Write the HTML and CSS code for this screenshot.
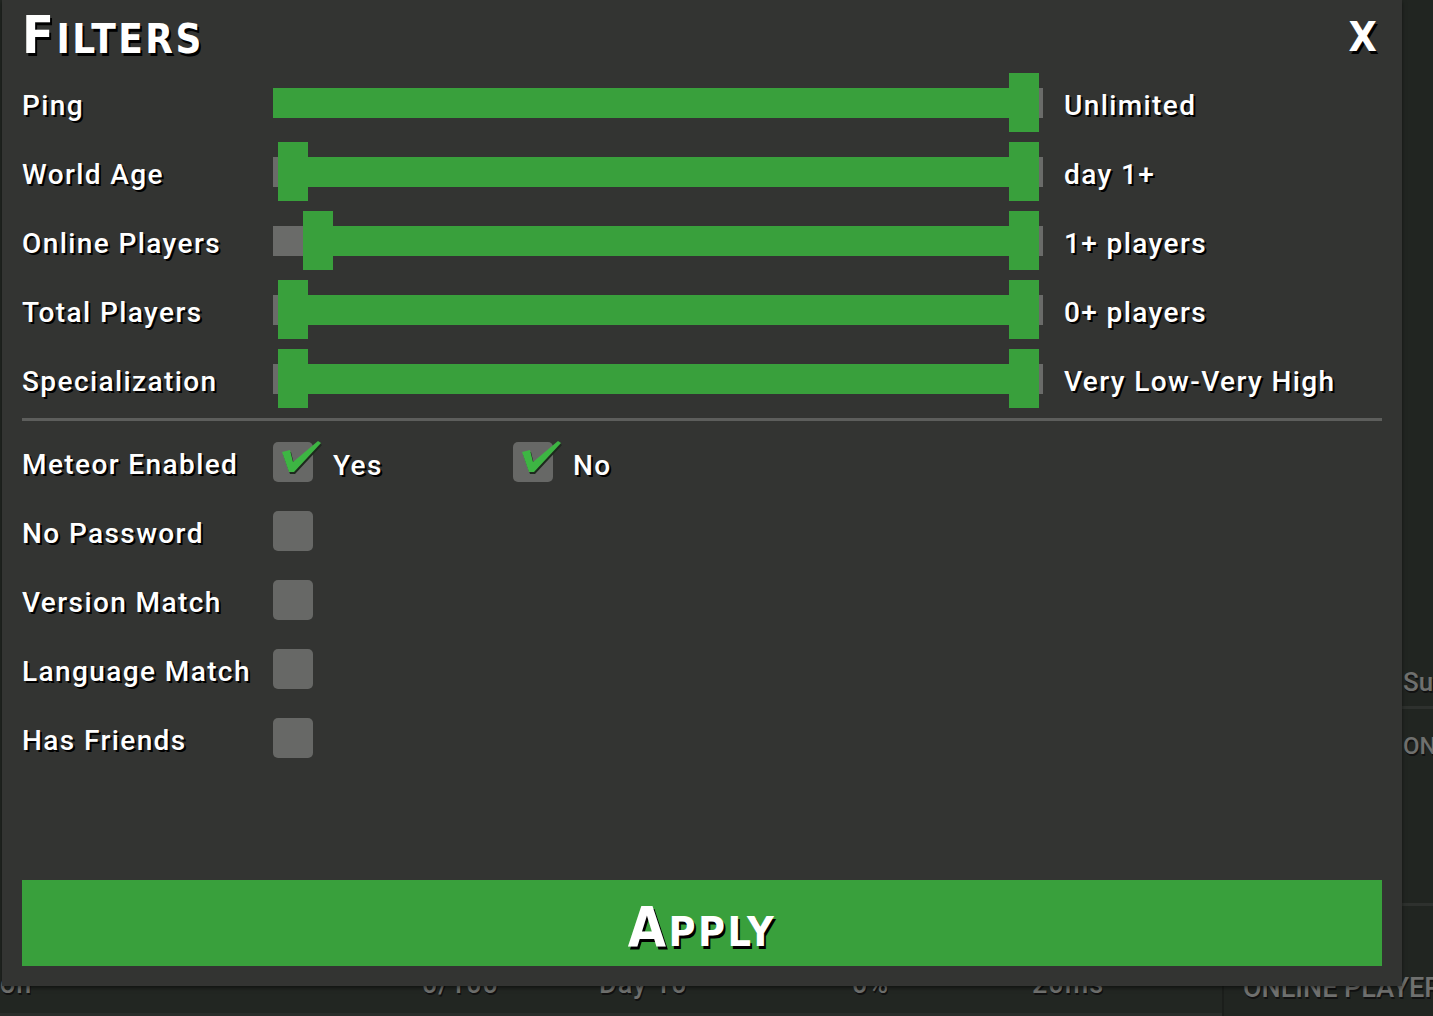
FILE: index.html
```html
<!DOCTYPE html>
<html lang="en">
<head>
<meta charset="utf-8">
<title>Filters</title>
<link rel="stylesheet" href="styles.css">
</head>
<body>
<div class="backdrop">
  <div class="bg-main">
    <div class="bg-row">
      <span class="bg-c1">ion</span>
      <span class="bg-c2">0/100</span>
      <span class="bg-c3">Day 10</span>
      <span class="bg-c4">0%</span>
      <span class="bg-c5">20ms</span>
    </div>
    <div class="bg-band"></div>
  </div>
  <div class="bg-side">
    <div class="side-su">Su</div>
    <div class="side-line"></div>
    <div class="side-on">ON</div>
    <div class="side-line second"></div>
    <div class="side-head">ONLINE PLAYER</div>
  </div>
</div>

<div class="modal">
  <div class="modal-head">
    <h1 class="title"><span class="cap">F</span><span class="sc">ilters</span></h1>
    <div class="close">X</div>
  </div>

  <div class="row">
    <div class="label">Ping</div>
    <div class="slider">
      <div class="track"></div>
      <div class="fill" style="left:0px;width:736px"></div>
      <div class="handle" style="left:736px"></div>
    </div>
    <div class="value">Unlimited</div>
  </div>
  <div class="row">
    <div class="label">World Age</div>
    <div class="slider">
      <div class="track"></div>
      <div class="fill" style="left:35px;width:701px"></div>
      <div class="handle" style="left:5px"></div>
      <div class="handle" style="left:736px"></div>
    </div>
    <div class="value">day 1+</div>
  </div>
  <div class="row">
    <div class="label">Online Players</div>
    <div class="slider">
      <div class="track"></div>
      <div class="fill" style="left:60px;width:676px"></div>
      <div class="handle" style="left:30px"></div>
      <div class="handle" style="left:736px"></div>
    </div>
    <div class="value">1+ players</div>
  </div>
  <div class="row">
    <div class="label">Total Players</div>
    <div class="slider">
      <div class="track"></div>
      <div class="fill" style="left:35px;width:701px"></div>
      <div class="handle" style="left:5px"></div>
      <div class="handle" style="left:736px"></div>
    </div>
    <div class="value">0+ players</div>
  </div>
  <div class="row">
    <div class="label">Specialization</div>
    <div class="slider">
      <div class="track"></div>
      <div class="fill" style="left:35px;width:701px"></div>
      <div class="handle" style="left:5px"></div>
      <div class="handle" style="left:736px"></div>
    </div>
    <div class="value">Very Low-Very High</div>
  </div>

  <div class="divider"></div>

  <div class="row">
    <div class="label">Meteor Enabled</div>
    <div class="options">
      <div class="option">
        <div class="box checked">
          <svg class="check" viewBox="0 0 50 45" width="50" height="45">
            <polygon class="check-shadow" points="4,24 12,22 15,34 40,13 43,15 16,44 11,44"/>
            <polygon class="check-mark" points="3,22 11,20 14,32 39,11 42,13 15,42 10,42"/>
          </svg>
        </div>
        <span class="opt-text">Yes</span>
      </div>
      <div class="option">
        <div class="box checked">
          <svg class="check" viewBox="0 0 50 45" width="50" height="45">
            <polygon class="check-shadow" points="4,24 12,22 15,34 40,13 43,15 16,44 11,44"/>
            <polygon class="check-mark" points="3,22 11,20 14,32 39,11 42,13 15,42 10,42"/>
          </svg>
        </div>
        <span class="opt-text">No</span>
      </div>
    </div>
  </div>
  <div class="row">
    <div class="label">No Password</div>
    <div class="options"><div class="option"><div class="box"></div></div></div>
  </div>
  <div class="row">
    <div class="label">Version Match</div>
    <div class="options"><div class="option"><div class="box"></div></div></div>
  </div>
  <div class="row">
    <div class="label">Language Match</div>
    <div class="options"><div class="option"><div class="box"></div></div></div>
  </div>
  <div class="row">
    <div class="label">Has Friends</div>
    <div class="options"><div class="option"><div class="box"></div></div></div>
  </div>

  <button class="apply"><span class="cap">A</span><span class="sc">pply</span></button>
</div>
</body>
</html>
```

FILE: styles.css
```css
html, body {
  margin: 0;
  padding: 0;
}
body {
  width: 1433px;
  height: 1016px;
  overflow: hidden;
  background: #1f231f;
  font-family: Roboto, "Liberation Sans", sans-serif;
  position: relative;
}

/* ---------- page behind the dialog ---------- */
.backdrop {
  display: grid;
  grid-template-columns: 1222px 211px;
  height: 1016px;
}
.bg-main {
  display: flex;
  flex-direction: column;
  justify-content: flex-end;
  background: #222622;
}
.bg-row {
  display: flex;
  height: 44px;
  align-items: flex-start;
  color: #6f706e;
  font-size: 27px;
  font-weight: 500;
  letter-spacing: 1px;
  text-shadow: 1px 2px 0 #111;
  line-height: 30px;
}
.bg-row span { display: block; }
.bg-c1 { width: 430px; margin-left: -8px; }
.bg-c2 { width: 177px; }
.bg-c3 { width: 253px; }
.bg-c4 { width: 180px; }
.bg-c5 { width: 120px; }
.bg-band {
  height: 3px;
  background: #2a2d2a;
}
.bg-side {
  display: flex;
  flex-direction: column;
  background: #212521;
  border-left: 2px solid #1b1e1b;
  color: #6f706e;
  font-size: 26px;
  font-weight: 500;
  text-shadow: 1px 2px 0 #111;
}
.side-su {
  margin-top: 665px;
  padding-left: 179px;
  line-height: 34px;
}
.side-line {
  height: 3px;
  background: #2e312e;
  margin-top: 7px;
}
.side-line.second { margin-top: 140px; }
.side-on {
  margin-top: 20px;
  padding-left: 179px;
  font-size: 24px;
  line-height: 34px;
}
.side-head {
  margin-top: 67px;
  padding-left: 19px;
  font-size: 27px;
  letter-spacing: 0;
  line-height: 30px;
  white-space: nowrap;
}

/* ---------- dialog ---------- */
.modal {
  position: absolute;
  top: 0;
  left: 2px;
  width: 1400px;
  height: 986px;
  box-sizing: border-box;
  padding: 0 20px 20px 20px;
  background: #333432;
  display: flex;
  flex-direction: column;
  box-shadow: 0 2px 4px rgba(0, 0, 0, 0.5);
}
.modal-head {
  height: 68px;
  display: flex;
  justify-content: space-between;
  align-items: flex-start;
}
.title {
  margin: 7px 0 0 0;
  font-family: "DejaVu Sans Condensed", "DejaVu Sans", sans-serif;
  font-stretch: condensed;
  font-weight: bold;
  color: #ffffff;
  text-shadow: 2px 3px 0 #000;
  line-height: 56px;
  letter-spacing: 2.5px;
  white-space: nowrap;
}
.title .cap { font-size: 52px; }
.title .sc { font-size: 40px; text-transform: uppercase; }
.close {
  margin: 13px 5px 0 0;
  font-family: "DejaVu Sans Condensed", "DejaVu Sans", sans-serif;
  font-stretch: condensed;
  font-weight: bold;
  font-size: 41px;
  line-height: 48px;
  color: #ffffff;
  text-shadow: 2px 3px 0 #000;
}

.row {
  display: grid;
  grid-template-columns: 251px 770px 1fr;
  height: 69px;
  align-items: center;
  flex: none;
}
.label, .value, .opt-text {
  color: #ffffff;
  font-size: 28px;
  font-weight: 500;
  letter-spacing: 1.4px;
  text-shadow: 2px 2px 0 #000;
  white-space: nowrap;
}
.label { padding-top: 5px; }
.value { padding-top: 5px; padding-left: 21px; }

.slider {
  position: relative;
  height: 59px;
}
.track {
  position: absolute;
  left: 0;
  right: 0;
  top: 15px;
  height: 30px;
  background: #6a6b69;
}
.fill {
  position: absolute;
  top: 15px;
  height: 30px;
  background: #39a03c;
}
.handle {
  position: absolute;
  top: 0;
  width: 30px;
  height: 59px;
  background: #39a03c;
}

.divider {
  flex: none;
  height: 3px;
  background: #5d5e5c;
  margin: 5px 0 6px 0;
}

.options {
  grid-column: 2 / 4;
  display: flex;
}
.option {
  width: 240px;
  display: flex;
  align-items: center;
  gap: 20px;
}
.opt-text { padding-top: 8px; }
.box {
  position: relative;
  width: 40px;
  height: 40px;
  border-radius: 5px;
  background: #676866;
}
.check {
  position: absolute;
  left: 6px;
  top: -12px;
  overflow: visible;
}
.check-shadow { fill: #1d2a1d; }
.check-mark { fill: #3db543; }

.apply {
  margin-top: auto;
  flex: none;
  height: 86px;
  width: 100%;
  border: 0;
  padding: 0;
  background: #39a03c;
  color: #ffffff;
  font-family: "DejaVu Sans Condensed", "DejaVu Sans", sans-serif;
  font-stretch: condensed;
  font-weight: bold;
  letter-spacing: 2.5px;
  text-shadow: 2px 3px 0 #000;
  line-height: 60px;
  padding-top: 17px;
  box-sizing: border-box;
  cursor: pointer;
}
.apply .cap { font-size: 55px; }
.apply .sc { font-size: 41px; text-transform: uppercase; }
```
